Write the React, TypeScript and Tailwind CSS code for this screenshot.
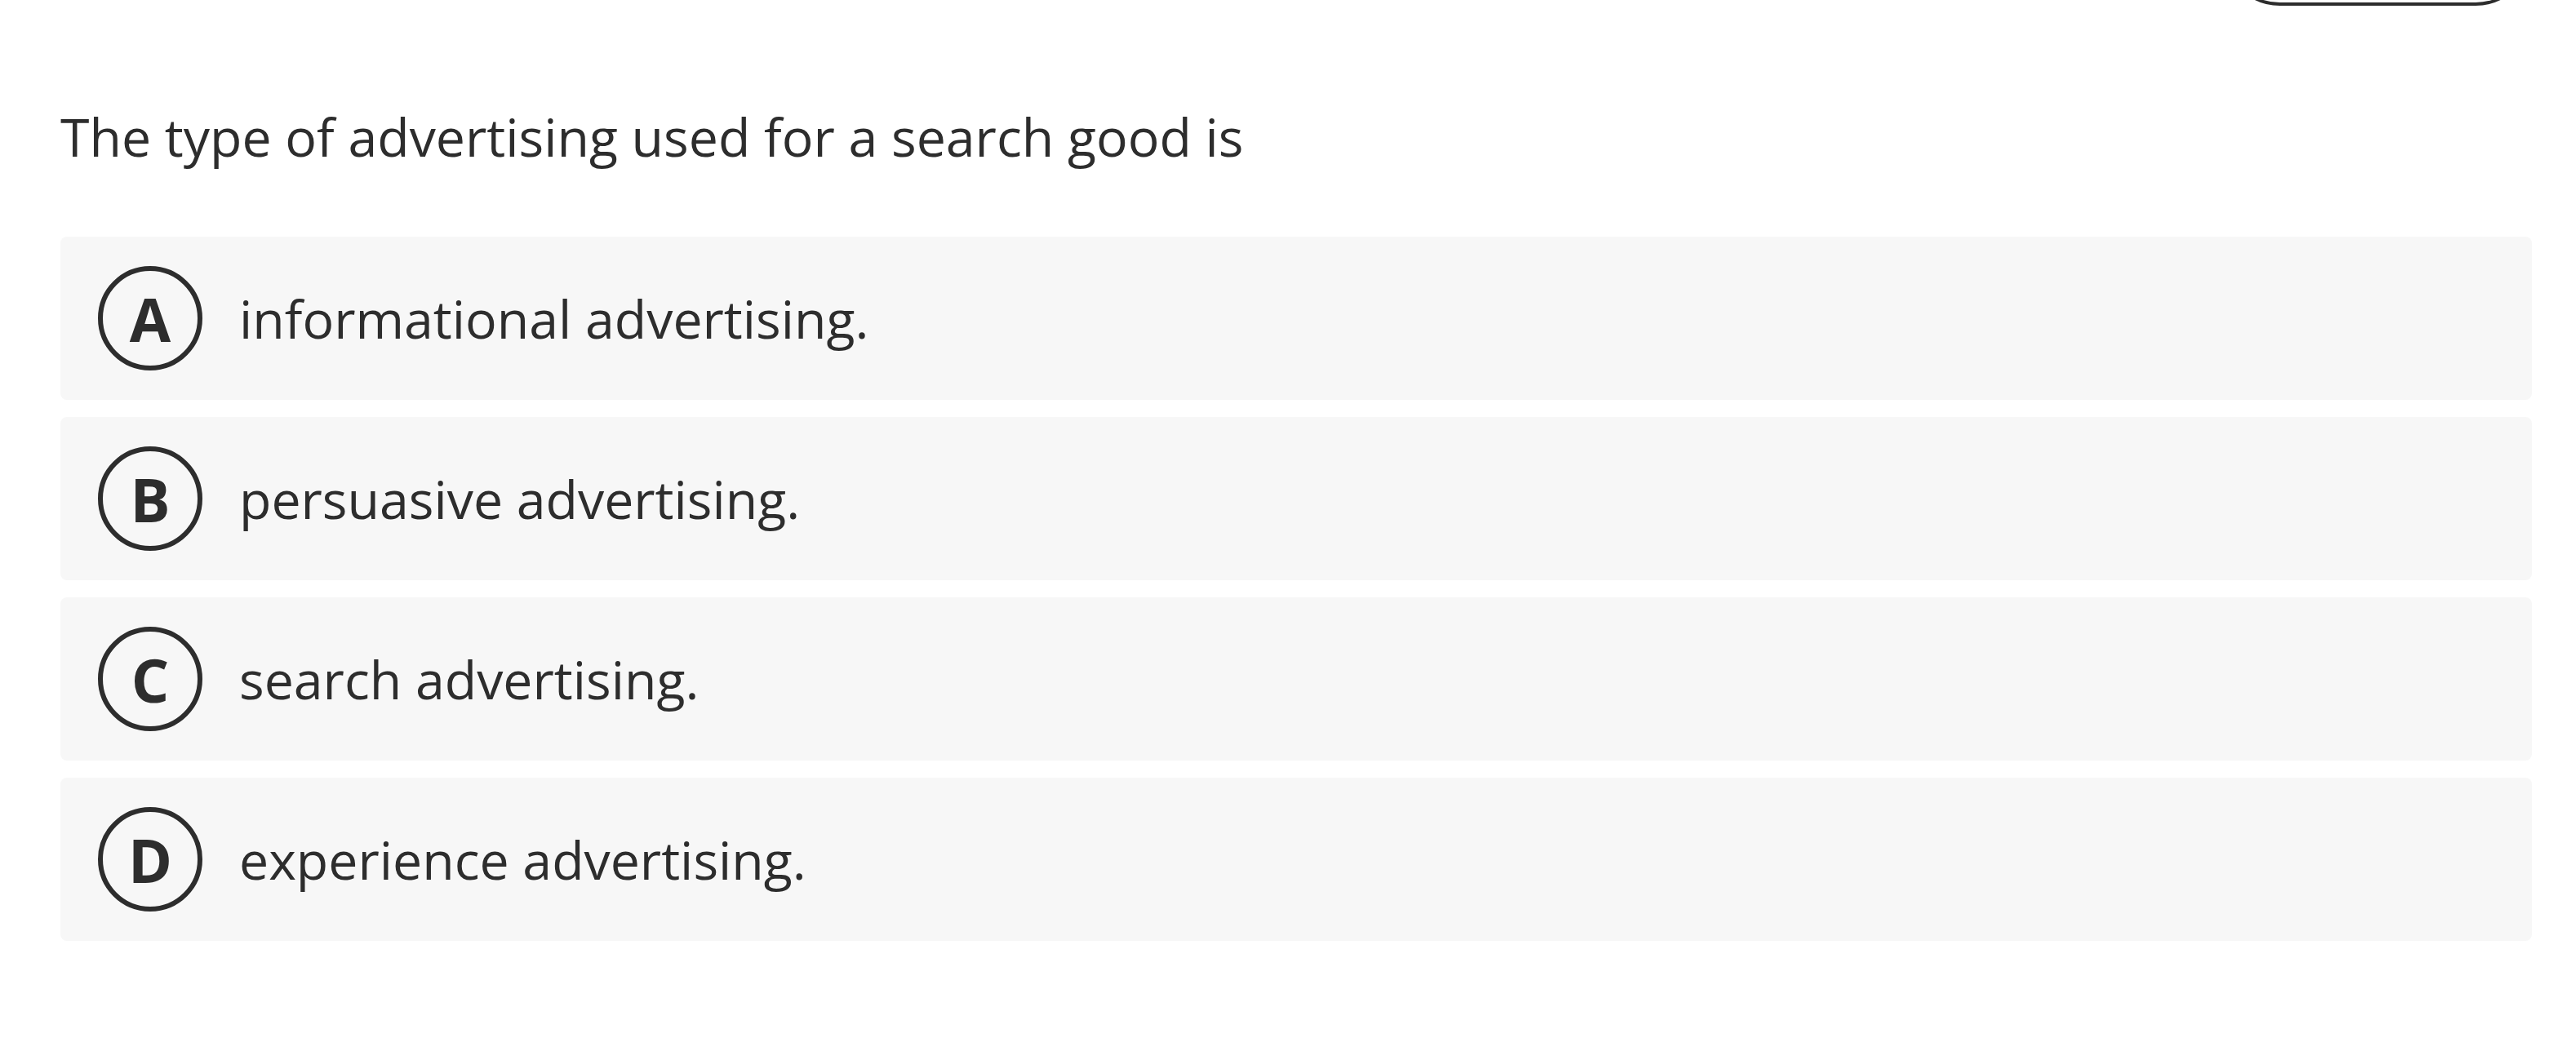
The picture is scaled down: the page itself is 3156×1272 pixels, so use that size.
import React from "react";

const options = [
  { letter: "A", text: "informational advertising." },
  { letter: "B", text: "persuasive advertising." },
  { letter: "C", text: "search advertising." },
  { letter: "D", text: "experience advertising." },
];

export default function App() {
  return (
    <div
      className="w-full h-[1272px] bg-white flex flex-col overflow-hidden text-[#2d2d2d]"
      style={{ fontFamily: '"Open Sans", "Noto Sans", sans-serif' }}
    >
      <div className="flex justify-end pr-[55px]">
        <div className="w-[376px] h-[140px] -mt-[133px] rounded-[68px] border-[4px] border-[#2d2d2d]" />
      </div>
      <div className="mt-[112px] pl-[74px] text-[64.4px] leading-[96px]">
        The type of advertising used for a search good is
      </div>
      <div className="mt-[75px] pl-[74px] pr-[54px] flex flex-col gap-[21px]">
        {options.map((o) => (
          <div
            key={o.letter}
            className="h-[200px] rounded-[8px] bg-[#f7f7f7] flex items-center pl-[46px]"
          >
            <div className="w-[128px] h-[128px] rounded-full border-[6px] border-[#2d2d2d] flex items-center justify-center shrink-0">
              <span className="text-[73px] font-bold leading-none">{o.letter}</span>
            </div>
            <span className="ml-[45px] text-[64.4px] leading-[96px]">{o.text}</span>
          </div>
        ))}
      </div>
    </div>
  );
}
